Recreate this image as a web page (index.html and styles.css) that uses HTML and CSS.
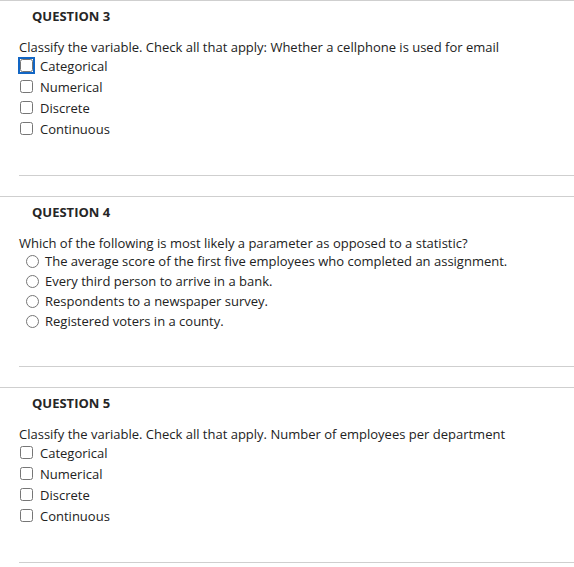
FILE: index.html
```html
<!DOCTYPE html>
<html lang="en">
<head>
<meta charset="utf-8">
<title>Questions</title>
<link rel="stylesheet" href="styles.css">
</head>
<body>
<section class="question">
  <h3 class="q-title">QUESTION 3</h3>
  <div class="q-body">
    <p class="q-text">Classify the variable. Check all that apply: Whether a cellphone is used for email</p>
    <ul class="options">
      <li><label class="opt"><input type="checkbox" class="box focused"><span>Categorical</span></label></li>
      <li><label class="opt"><input type="checkbox" class="box"><span>Numerical</span></label></li>
      <li><label class="opt"><input type="checkbox" class="box"><span>Discrete</span></label></li>
      <li><label class="opt"><input type="checkbox" class="box"><span>Continuous</span></label></li>
    </ul>
  </div>
</section>
<section class="question">
  <h3 class="q-title">QUESTION 4</h3>
  <div class="q-body">
    <p class="q-text">Which of the following is most likely a parameter as opposed to a statistic?</p>
    <ul class="options radios">
      <li><label class="opt"><input type="radio" name="q4" class="radio"><span>The average score of the first five employees who completed an assignment.</span></label></li>
      <li><label class="opt"><input type="radio" name="q4" class="radio"><span>Every third person to arrive in a bank.</span></label></li>
      <li><label class="opt"><input type="radio" name="q4" class="radio"><span>Respondents to a newspaper survey.</span></label></li>
      <li><label class="opt"><input type="radio" name="q4" class="radio"><span>Registered voters in a county.</span></label></li>
    </ul>
  </div>
</section>
<section class="question">
  <h3 class="q-title">QUESTION 5</h3>
  <div class="q-body">
    <p class="q-text">Classify the variable. Check all that apply. Number of employees per department</p>
    <ul class="options">
      <li><label class="opt"><input type="checkbox" class="box"><span>Categorical</span></label></li>
      <li><label class="opt"><input type="checkbox" class="box"><span>Numerical</span></label></li>
      <li><label class="opt"><input type="checkbox" class="box"><span>Discrete</span></label></li>
      <li><label class="opt"><input type="checkbox" class="box"><span>Continuous</span></label></li>
    </ul>
  </div>
</section>
</body>
</html>
```
FILE: styles.css
```css
html, body {
  margin: 0;
  padding: 0;
  background: #fff;
}
body {
  font-family: "Open Sans", "Liberation Sans", sans-serif;
  color: #222;
  font-size: 13px;
}
.question {
  border-top: 1px solid #cfcfcf;
}
.q-title {
  margin: 0;
  padding: 6px 0 0 32px;
  font-size: 13px;
  line-height: 18px;
  font-weight: 700;
  color: #262626;
}
.q-body {
  margin: 13px 0 20px 19px;
  padding-bottom: 35px;
  border-bottom: 1px solid #cfcfcf;
}
.q-text {
  margin: 0;
  line-height: 18px;
}
.options {
  list-style: none;
  margin: -1px 0 0;
  padding: 0 0 1px;
}
.opt {
  display: flex;
  align-items: center;
  height: 21px;
}
.box {
  width: 13px;
  height: 13px;
  margin: 0 7px 0 1px;
}
.focused {
  outline: 2px solid #1266c4;
  outline-offset: 0;
}
.radios {
  padding-bottom: 0;
}
.radios .opt {
  height: 20px;
}
.radio {
  width: 13px;
  height: 13px;
  margin: 0 6px 0 7px;
}
```
